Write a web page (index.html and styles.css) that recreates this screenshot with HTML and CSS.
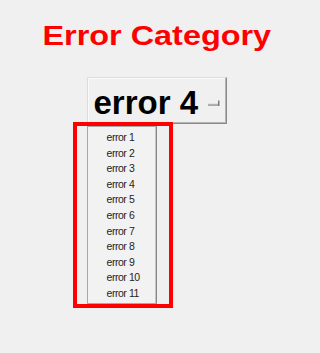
FILE: index.html
```html
<!DOCTYPE html>
<html>
<head>
<meta charset="utf-8">
<link rel="stylesheet" href="styles.css">
</head>
<body>
<div class="page">
  <h1 class="title"><span class="title-text">Error Category</span></h1>
  <div class="combo">
    <div class="combo-button">
      <span class="combo-value">error 4</span>
      <svg class="combo-glyph" width="13" height="7" viewBox="0 0 13 7">
        <rect x="0" y="4" width="11" height="2" fill="#a8a8a8"/>
        <rect x="10" y="0.5" width="1.5" height="5.5" fill="#7c7c7c"/>
        <rect x="0" y="3.5" width="10" height="0.7" fill="#d8d8d8"/>
      </svg>
    </div>
    <ul class="combo-list">
      <li>error 1</li>
      <li>error 2</li>
      <li>error 3</li>
      <li>error 4</li>
      <li>error 5</li>
      <li>error 6</li>
      <li>error 7</li>
      <li>error 8</li>
      <li>error 9</li>
      <li>error 10</li>
      <li>error 11</li>
    </ul>
    <div class="highlight-box"></div>
  </div>
</div>
</body>
</html>
```
FILE: styles.css
```css
html, body {
  margin: 0;
  padding: 0;
  background: #f0f0f0;
}

.page {
  box-sizing: border-box;
  width: 303px;
  height: 353px;
  overflow: hidden;
  display: flex;
  flex-direction: column;
  align-items: center;
  padding: 20px 0 0 10px;
  font-family: "Liberation Sans", Arial, sans-serif;
}

.title {
  margin: 0;
  font-size: 28px;
  line-height: 32px;
  font-weight: bold;
  color: #ff0000;
  white-space: nowrap;
}

.title-text {
  display: inline-block;
  transform: scaleX(1.157);
}

.combo {
  position: relative;
  margin-top: 25px;
  width: 140px;
  display: flex;
  flex-direction: column;
  align-items: flex-start;
}

.combo-button {
  box-sizing: border-box;
  width: 140px;
  height: 47px;
  display: flex;
  align-items: flex-start;
  padding-left: 6px;
  border: 1px solid;
  border-color: #dcdcdc #8a8a8a #8a8a8a #dcdcdc;
  box-shadow: inset -1px -1px 0 #b4b4b4, inset 1px 1px 0 #fafafa;
  background: #f0f0f0;
}

.combo-value {
  margin-top: 5.5px;
  font-size: 33px;
  line-height: 38px;
  font-weight: bold;
  color: #000;
  white-space: nowrap;
}

.combo-glyph {
  flex: none;
  margin-top: 21.5px;
  margin-left: 10px;
}

.combo-list {
  box-sizing: border-box;
  width: 70px;
  height: 178px;
  margin: 2px 0 0 0;
  padding: 3px 0 1px 19px;
  list-style: none;
  background: #f2f2f2;
  border-top: 1px solid #a8a8a8;
  border-left: 1px solid #a8a8a8;
  border-right: 1px solid #888;
  border-bottom: 1px solid #a8a8a8;
  box-shadow: inset -1px 0 0 #c4c4c4;
}

.combo-list li {
  font-size: 10.5px;
  line-height: 15.6px;
  letter-spacing: -0.45px;
  color: #1e1e1e;
  white-space: nowrap;
}

.highlight-box {
  position: absolute;
  left: -14px;
  top: 45px;
  width: 100px;
  height: 186px;
  box-sizing: border-box;
  border: 4px solid #ff0000;
}
```
